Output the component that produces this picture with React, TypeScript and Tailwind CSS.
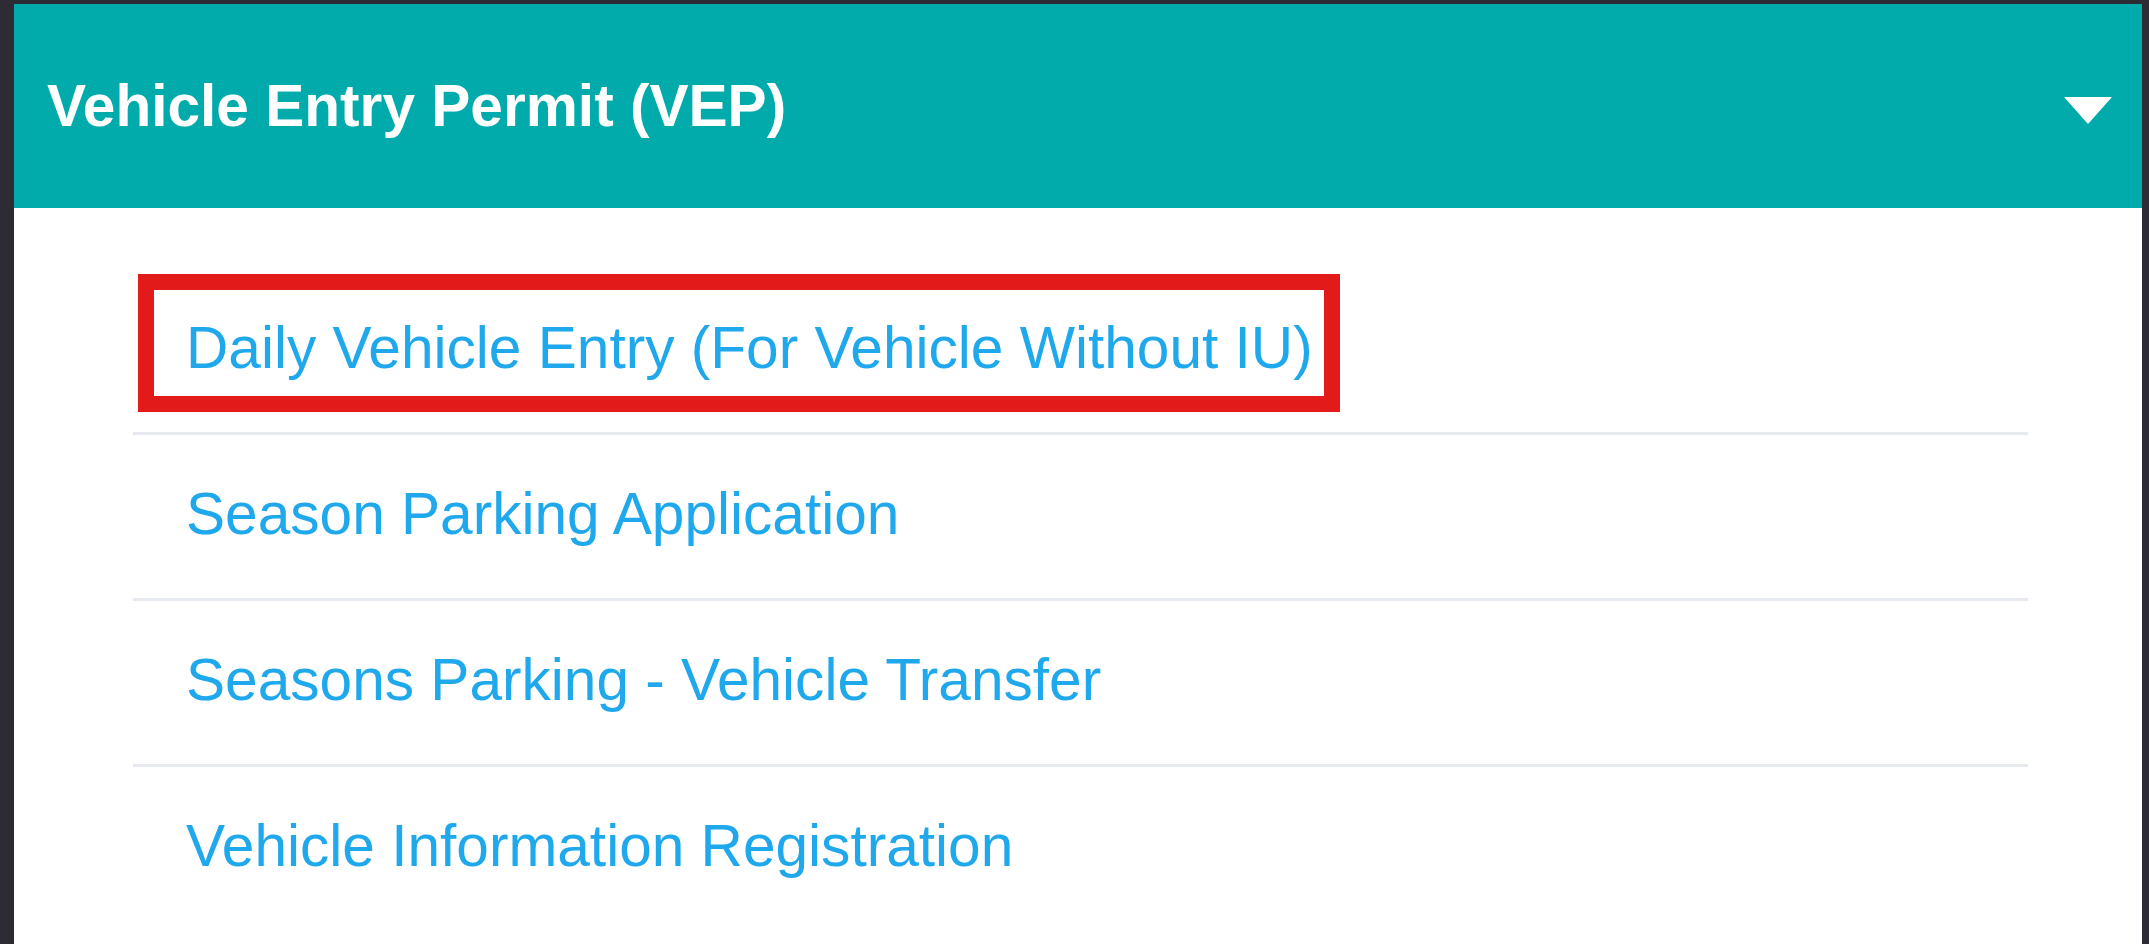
import React from 'react';

const items = [
  'Daily Vehicle Entry (For Vehicle Without IU)',
  'Season Parking Application',
  'Seasons Parking - Vehicle Transfer',
  'Vehicle Information Registration',
];

const CaretDown = () => (
  <svg width="48" height="27" viewBox="0 0 48 27" className="shrink-0 mt-[8px]">
    <polygon points="0,0 48,0 24,27" fill="#ffffff" />
  </svg>
);

const MenuItem = ({ label, highlight, last }: { label: string; highlight?: boolean; last?: boolean }) => (
  <li className={`pl-[53px] pt-[46px] pb-[51px] ${last ? '' : 'border-b-[3px] border-[#e6eaf0]'}`}>
    <a href="#" className="relative inline-block text-[58.6px] leading-[66px] text-[#20a8ec]">
      {label}
      {highlight && (
        <span className="absolute -left-[48px] -right-[27px] -top-[41px] -bottom-[31px] border-[16px] border-[#e31a1a] pointer-events-none" />
      )}
    </a>
  </li>
);

export default function App() {
  return (
    <div
      className="w-full h-[944px] overflow-hidden bg-[#2d2c34] pt-[4px] pl-[14px] pr-[7px] flex"
      style={{ fontFamily: '"Liberation Sans", Arial, sans-serif' }}
    >
      <div className="flex-1 flex flex-col bg-white">
        <div className="h-[204px] bg-[#02abab] flex items-center justify-between pl-[33px] pr-[30px]">
          <h2 className="text-[58.6px] leading-[66px] font-bold text-white">Vehicle Entry Permit (VEP)</h2>
          <CaretDown />
        </div>
        <ul className="ml-[119px] mr-[114px] pt-[61px]">
          {items.map((label, i) => (
            <MenuItem key={label} label={label} highlight={i === 0} last={i === items.length - 1} />
          ))}
        </ul>
      </div>
    </div>
  );
}
